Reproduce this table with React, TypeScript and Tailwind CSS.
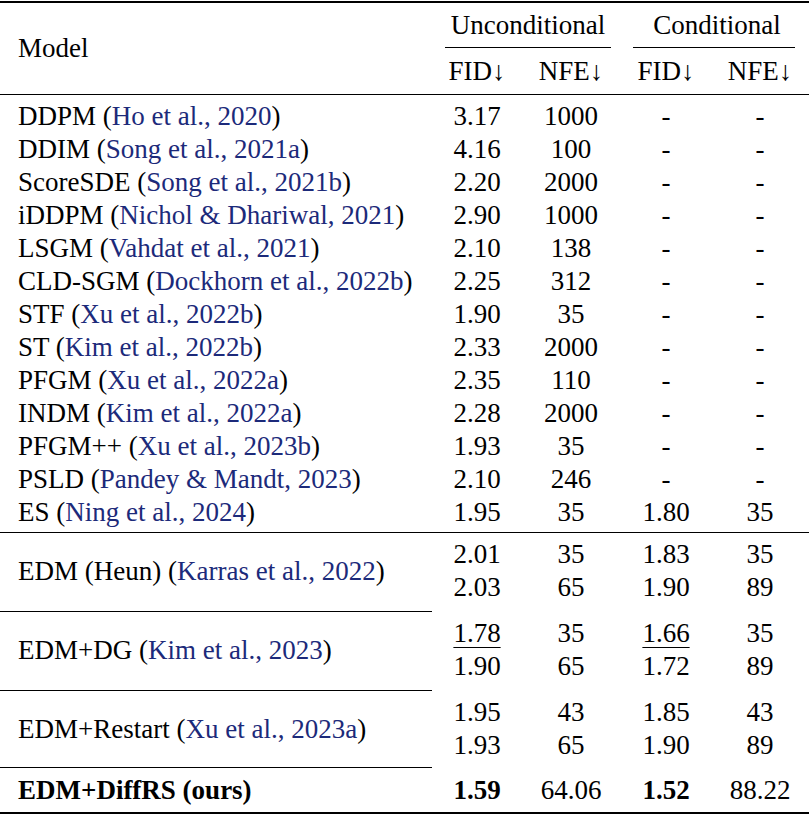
import React from 'react';

const COLS = 'grid grid-cols-[433px_88px_100px_90px_98px]';
const LINK = 'text-[#1c2a7a]';

type Row = { model: string; cite: string; fid: string; nfe: string; cfid: string; cnfe: string };

const baseline: Row[] = [
  { model: 'DDPM', cite: 'Ho et al., 2020', fid: '3.17', nfe: '1000', cfid: '-', cnfe: '-' },
  { model: 'DDIM', cite: 'Song et al., 2021a', fid: '4.16', nfe: '100', cfid: '-', cnfe: '-' },
  { model: 'ScoreSDE', cite: 'Song et al., 2021b', fid: '2.20', nfe: '2000', cfid: '-', cnfe: '-' },
  { model: 'iDDPM', cite: 'Nichol & Dhariwal, 2021', fid: '2.90', nfe: '1000', cfid: '-', cnfe: '-' },
  { model: 'LSGM', cite: 'Vahdat et al., 2021', fid: '2.10', nfe: '138', cfid: '-', cnfe: '-' },
  { model: 'CLD-SGM', cite: 'Dockhorn et al., 2022b', fid: '2.25', nfe: '312', cfid: '-', cnfe: '-' },
  { model: 'STF', cite: 'Xu et al., 2022b', fid: '1.90', nfe: '35', cfid: '-', cnfe: '-' },
  { model: 'ST', cite: 'Kim et al., 2022b', fid: '2.33', nfe: '2000', cfid: '-', cnfe: '-' },
  { model: 'PFGM', cite: 'Xu et al., 2022a', fid: '2.35', nfe: '110', cfid: '-', cnfe: '-' },
  { model: 'INDM', cite: 'Kim et al., 2022a', fid: '2.28', nfe: '2000', cfid: '-', cnfe: '-' },
  { model: 'PFGM++', cite: 'Xu et al., 2023b', fid: '1.93', nfe: '35', cfid: '-', cnfe: '-' },
  { model: 'PSLD', cite: 'Pandey & Mandt, 2023', fid: '2.10', nfe: '246', cfid: '-', cnfe: '-' },
  { model: 'ES', cite: 'Ning et al., 2024', fid: '1.95', nfe: '35', cfid: '1.80', cnfe: '35' },
];

type Group = {
  model: string;
  cite: string;
  pb: string;
  rows: { fid: string; nfe: string; cfid: string; cnfe: string; ul?: boolean }[];
};

const edm: Group[] = [
  {
    model: 'EDM (Heun)',
    cite: 'Karras et al., 2022',
    pb: 'pb-[7px]',
    rows: [
      { fid: '2.01', nfe: '35', cfid: '1.83', cnfe: '35' },
      { fid: '2.03', nfe: '65', cfid: '1.90', cnfe: '89' },
    ],
  },
  {
    model: 'EDM+DG',
    cite: 'Kim et al., 2023',
    pb: 'pb-[7px]',
    rows: [
      { fid: '1.78', nfe: '35', cfid: '1.66', cnfe: '35', ul: true },
      { fid: '1.90', nfe: '65', cfid: '1.72', cnfe: '89' },
    ],
  },
  {
    model: 'EDM+Restart',
    cite: 'Xu et al., 2023a',
    pb: 'pb-[5px]',
    rows: [
      { fid: '1.95', nfe: '43', cfid: '1.85', cnfe: '43' },
      { fid: '1.93', nfe: '65', cfid: '1.90', cnfe: '89' },
    ],
  },
];

function ModelName({ model, cite }: { model: string; cite: string }) {
  return (
    <span className="pl-[18px] whitespace-nowrap">
      {model} (<span className={LINK}>{cite}</span>)
    </span>
  );
}

function Num({ children, ul }: { children: React.ReactNode; ul?: boolean }) {
  return (
    <div className="text-center">
      <span className={ul ? 'underline decoration-1 underline-offset-[5px]' : ''}>{children}</span>
    </div>
  );
}

export default function App() {
  return (
    <div className="w-[811px] h-[818px] bg-white text-black font-[family-name:Liberation_Serif,serif] text-[27px] leading-[33px]">
      <div className="w-[809px] pt-[1px]">
        {/* top rule */}
        <div className="h-[2px] bg-black" />

        {/* header */}
        <div className={`${COLS}`}>
          <div className="row-span-3 flex items-center pl-[18px]">Model</div>
          <div className="col-span-2 h-[44px] flex items-center justify-center pl-[2px]">Unconditional</div>
          <div className="col-span-2 h-[44px] flex items-center justify-center pl-[4px]">Conditional</div>
          <div className="col-span-2 ml-[12px] mr-[10px] h-[1px] bg-black" />
          <div className="col-span-2 ml-[12px] mr-[14px] h-[1px] bg-black" />
          <div className="h-[46px] flex items-center justify-center">FID↓</div>
          <div className="h-[46px] flex items-center justify-center">NFE↓</div>
          <div className="h-[46px] flex items-center justify-center">FID↓</div>
          <div className="h-[46px] flex items-center justify-center">NFE↓</div>
        </div>
        <div className="h-[1px] bg-black" />

        {/* baselines */}
        <div className="pt-[5px] pb-[3px]">
          {baseline.map((r) => (
            <div key={r.model} className={`${COLS} h-[33px]`}>
              <ModelName model={r.model} cite={r.cite} />
              <Num>{r.fid}</Num>
              <Num>{r.nfe}</Num>
              <Num>{r.cfid}</Num>
              <Num>{r.cnfe}</Num>
            </div>
          ))}
        </div>
        <div className="h-[1px] bg-black" />

        {/* EDM groups */}
        {edm.map((g) => (
          <div key={g.model}>
            <div className={`${COLS} pt-[5px] ${g.pb}`}>
              <div className="row-span-2 flex items-center">
                <ModelName model={g.model} cite={g.cite} />
              </div>
              {g.rows.map((r, i) => (
                <React.Fragment key={i}>
                  <Num ul={r.ul}>{r.fid}</Num>
                  <Num>{r.nfe}</Num>
                  <Num ul={r.ul}>{r.cfid}</Num>
                  <Num>{r.cnfe}</Num>
                </React.Fragment>
              ))}
            </div>
            <div className="w-[432px] h-[1px] bg-black" />
          </div>
        ))}

        {/* ours */}
        <div className={`${COLS} h-[33px] mt-[6px] mb-[5px]`}>
          <span className="pl-[18px] font-bold">EDM+DiffRS (ours)</span>
          <Num>
            <b>1.59</b>
          </Num>
          <Num>64.06</Num>
          <Num>
            <b>1.52</b>
          </Num>
          <Num>88.22</Num>
        </div>
        <div className="h-[2px] bg-black" />
      </div>
    </div>
  );
}
